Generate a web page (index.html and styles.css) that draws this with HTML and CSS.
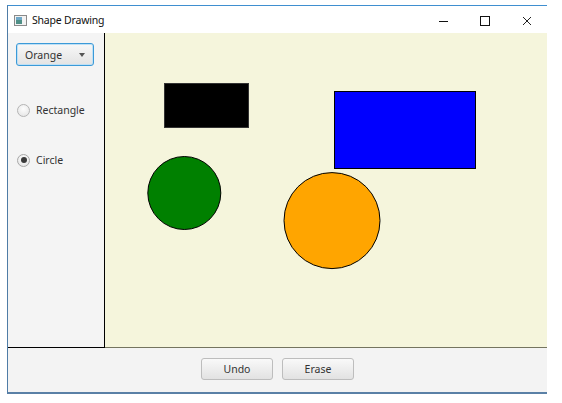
FILE: index.html
```html
<!DOCTYPE html>
<html>
<head>
<meta charset="utf-8">
<link rel="stylesheet" href="styles.css">
</head>
<body>
<div class="window">
  <div class="titlebar">
    <div class="title-left">
      <svg class="app-icon" width="13" height="11" viewBox="0 0 13 11">
        <rect x="0.5" y="0.5" width="12" height="10" fill="#f2f2f2" stroke="#8a8a8a"/>
        <rect x="2" y="2" width="6" height="7" fill="#4f8f86"/>
        <rect x="2" y="2" width="6" height="3" fill="#6fa8c8"/>
      </svg>
      <span class="title-text">Shape Drawing</span>
    </div>
    <div class="controls">
      <svg class="ctl" width="46" height="27" viewBox="0 0 46 27"><line x1="18" y1="15.5" x2="27" y2="15.5" stroke="#111" stroke-width="1"/></svg>
      <svg class="ctl" width="40" height="27" viewBox="0 0 40 27"><rect x="13.5" y="10.5" width="9" height="9" fill="none" stroke="#111" stroke-width="1"/></svg>
      <svg class="ctl" width="40" height="27" viewBox="0 0 40 27"><path d="M16 11 L24 19 M24 11 L16 19" stroke="#222" stroke-width="1"/></svg>
    </div>
  </div>
  <div class="content">
    <div class="main">
      <div class="side">
        <div class="combo">
          <span class="combo-text">Orange</span>
          <span class="combo-arrow"></span>
        </div>
        <div class="radio-row first">
          <span class="radio"></span>
          <span class="radio-label">Rectangle</span>
        </div>
        <div class="radio-row second">
          <span class="radio checked"><span class="dot"></span></span>
          <span class="radio-label">Circle</span>
        </div>
      </div>
      <div class="canvas">
        <svg width="441" height="314" viewBox="0 0 441 314">
          <rect x="59.5" y="50.5" width="84" height="44" fill="#000" stroke="#333" stroke-width="1"/>
          <rect x="229.5" y="58.5" width="141" height="77" fill="#0000ff" stroke="#000" stroke-width="1"/>
          <circle cx="79.3" cy="160" r="36.5" fill="#008000" stroke="#000" stroke-width="1"/>
          <circle cx="227" cy="187.6" r="48" fill="#ffa500" stroke="#000" stroke-width="1"/>
        </svg>
      </div>
    </div>
    <div class="bottom">
      <button class="btn">Undo</button>
      <button class="btn">Erase</button>
    </div>
  </div>
</div>
</body>
</html>
```
FILE: styles.css
```css
html, body {
  margin: 0;
  padding: 0;
  background: #ffffff;
}
body {
  font-family: "Noto Sans", "Open Sans", "Liberation Sans", sans-serif;
  font-size: 10.5px;
  color: #222;
}
.window {
  margin-left: 7px;
  margin-top: 5px;
  width: 539px;
  height: 386px;
  border-left: 1px solid #4f7ca6;
  border-top: 1px solid #3f8fd0;
  border-bottom: 2px solid #5a80a6;
  display: flex;
  flex-direction: column;
  background: #fff;
}
.titlebar {
  height: 27px;
  display: flex;
  align-items: center;
  justify-content: space-between;
  background: #fff;
}
.title-left {
  display: flex;
  align-items: center;
  padding-left: 6px;
}
.app-icon {
  display: block;
  margin-top: 1px;
}
.title-text {
  margin-left: 5px;
  font-size: 10.5px;
  color: #111;
  letter-spacing: -0.2px;
}
.controls {
  display: flex;
  align-items: flex-start;
  height: 27px;
}
.ctl {
  display: block;
}
.content {
  flex: 1;
  display: flex;
  flex-direction: column;
}
.main {
  height: 315px;
  display: flex;
}
.side {
  width: 97px;
  flex: none;
  box-sizing: border-box;
  border-right: 1px solid #000;
  border-bottom: 1px solid #000;
  background: #f4f4f4;
  padding: 10px 0 0 8px;
}
.canvas {
  flex: 1;
  background: #f5f5dc;
  border-bottom: 1px solid #74745f;
  overflow: hidden;
}
.canvas svg {
  display: block;
}
.combo {
  width: 78px;
  height: 23px;
  box-sizing: border-box;
  border: 1px solid #3b9ad8;
  border-radius: 3px;
  box-shadow: inset 0 0 0 1px #bfe0f5;
  background: linear-gradient(#f8f8f8, #e3e3e3);
  display: flex;
  align-items: center;
  justify-content: space-between;
  padding: 0 8px 0 8px;
}
.combo-text {
  color: #333;
}
.combo-arrow {
  width: 0;
  height: 0;
  border-left: 3.5px solid transparent;
  border-right: 3.5px solid transparent;
  border-top: 4px solid #555;
}
.radio-row {
  display: flex;
  align-items: center;
  height: 14px;
  margin-left: 1px;
}
.radio-row.first {
  margin-top: 37px;
}
.radio-row.second {
  margin-top: 36px;
}
.radio {
  width: 13px;
  height: 13px;
  box-sizing: border-box;
  border-radius: 50%;
  border: 1px solid #b4b4b4;
  background: radial-gradient(circle at 50% 35%, #fdfdfd, #e2e2e2);
  display: flex;
  align-items: center;
  justify-content: center;
}
.radio.checked {
  border-color: #a8a8a8;
}
.dot {
  width: 6px;
  height: 6px;
  border-radius: 50%;
  background: #3a3a3a;
}
.radio-label {
  margin-left: 6px;
  color: #333;
}
.bottom {
  flex: 1;
  background: #f3f3f3;
  display: flex;
  justify-content: center;
  align-items: flex-start;
  gap: 9px;
  padding-top: 10px;
  box-sizing: border-box;
}
.btn {
  width: 72px;
  height: 22px;
  border: 1px solid #bdbdbd;
  border-radius: 3px;
  background: linear-gradient(#f9f9f9, #e2e2e2);
  font-family: "Noto Sans", "Open Sans", "Liberation Sans", sans-serif;
  font-size: 10.5px;
  color: #333;
  padding: 0;
  margin: 0;
}
```
